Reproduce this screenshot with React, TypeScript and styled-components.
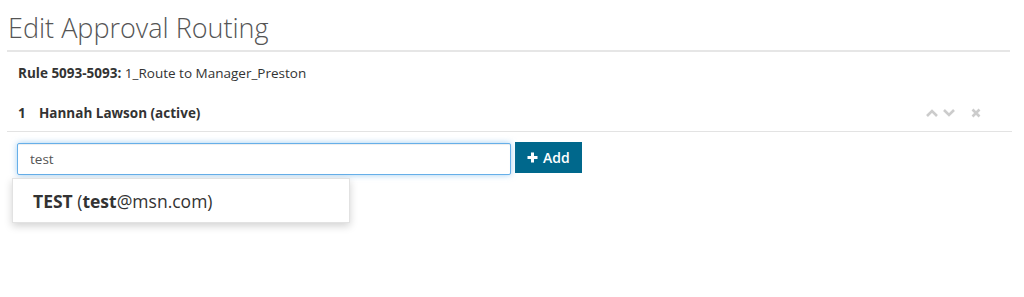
import React from 'react'
import styled, { createGlobalStyle } from 'styled-components'

const GlobalStyle = createGlobalStyle`
  html, body {
    margin: 0;
    background: #ffffff;
    font-family: "Open Sans", "Liberation Sans", Arial, sans-serif;
    color: #333333;
  }
`

const Page = styled.div`
  min-height: 297px;
  box-sizing: border-box;
  padding: 0 12px 0 7px;
`

const Title = styled.h1`
  margin: 0;
  padding: 10px 0 0 1px;
  font-size: 27px;
  font-weight: 300;
  line-height: 36px;
  color: #555555;
`

const Rule = styled.hr`
  margin: 4px 2px 0 0;
  border: 0;
  border-top: 2px solid #e6e6e6;
`

const Section = styled.div`
  padding: 12px 0 0 11px;
`

const RuleLine = styled.div`
  font-size: 13.5px;
  line-height: 18px;
  color: #333333;

  strong {
    font-weight: 700;
  }
`

const StepRow = styled.div`
  display: flex;
  align-items: center;
  margin-top: 12px;
  padding: 0 0 0 11px;
  height: 37px;
  border-bottom: 1px solid #e3e3e3;
  font-size: 13.5px;
  font-weight: 700;
`

const StepNumber = styled.span`
  width: 21px;
`

const StepName = styled.span`
  flex: 1;
`

const Controls = styled.div`
  display: flex;
  align-items: center;
  gap: 3px;
  padding-right: 31px;
  color: #cccccc;
`

const IconButton = styled.span<{ $gap?: number }>`
  display: inline-flex;
  margin-left: ${({ $gap }) => $gap ?? 0}px;
`

const AddRow = styled.div`
  display: flex;
  align-items: flex-start;
  gap: 4px;
  padding: 11px 0 0 10px;
`

const SearchField = styled.div`
  position: relative;
`

const SearchBox = styled.input`
  display: block;
  box-sizing: border-box;
  width: 494px;
  height: 32px;
  padding: 0 12px;
  border: 1px solid #66afe9;
  border-radius: 2px;
  box-shadow: inset 0 1px 1px rgba(0, 0, 0, 0.075), 0 0 6px rgba(102, 175, 233, 0.6);
  font-family: inherit;
  font-size: 13.5px;
  color: #555555;
  outline: none;
`

const AddButton = styled.button`
  display: inline-flex;
  align-items: center;
  gap: 5px;
  height: 31px;
  margin-top: -1px;
  padding: 0 12px;
  border: 0;
  border-radius: 0;
  background: #00688c;
  color: #ffffff;
  font-family: inherit;
  font-size: 14px;
  font-weight: 600;
  cursor: pointer;
`

const Suggestions = styled.div`
  position: absolute;
  z-index: 10;
  top: 35px;
  left: -5px;
  width: 338px;
  height: 45px;
  box-sizing: border-box;
  display: flex;
  align-items: center;
  padding-left: 20px;
  background: #ffffff;
  border: 1px solid #e2e2e2;
  box-shadow: 0 3px 8px rgba(0, 0, 0, 0.18);
  font-size: 17.5px;
  color: #333333;
  white-space: nowrap;

  strong {
    font-weight: 700;
  }
`

const Chevron = ({ up }: { up?: boolean }) => (
  <svg width="14" height="10" viewBox="0 0 14 10">
    <path
      d={up ? 'M2 8 L7 3 L12 8' : 'M2 2 L7 7 L12 2'}
      fill="none"
      stroke="currentColor"
      strokeWidth="2.6"
    />
  </svg>
)

const Cross = () => (
  <svg width="10" height="10" viewBox="0 0 10 10">
    <path d="M1.5 1.5 L8.5 8.5 M8.5 1.5 L1.5 8.5" stroke="currentColor" strokeWidth="2.6" />
  </svg>
)

const Plus = () => (
  <svg width="11" height="11" viewBox="0 0 11 11">
    <path d="M5.5 0.5 V10.5 M0.5 5.5 H10.5" stroke="#ffffff" strokeWidth="3" />
  </svg>
)

export default function App() {
  return (
    <Page>
      <GlobalStyle />
      <Title>Edit Approval Routing</Title>
      <Rule />
      <Section>
        <RuleLine>
          <strong>Rule 5093-5093:</strong> 1_Route to Manager_Preston
        </RuleLine>
      </Section>
      <StepRow>
        <StepNumber>1</StepNumber>
        <StepName>Hannah Lawson (active)</StepName>
        <Controls>
          <IconButton><Chevron up /></IconButton>
          <IconButton><Chevron /></IconButton>
          <IconButton $gap={12}><Cross /></IconButton>
        </Controls>
      </StepRow>
      <AddRow>
        <SearchField>
          <SearchBox defaultValue="test" />
          <Suggestions>
            <span>
              <strong>TEST</strong> (<strong>test</strong>@msn.com)
            </span>
          </Suggestions>
        </SearchField>
        <AddButton>
          <Plus /> Add
        </AddButton>
      </AddRow>
    </Page>
  )
}
